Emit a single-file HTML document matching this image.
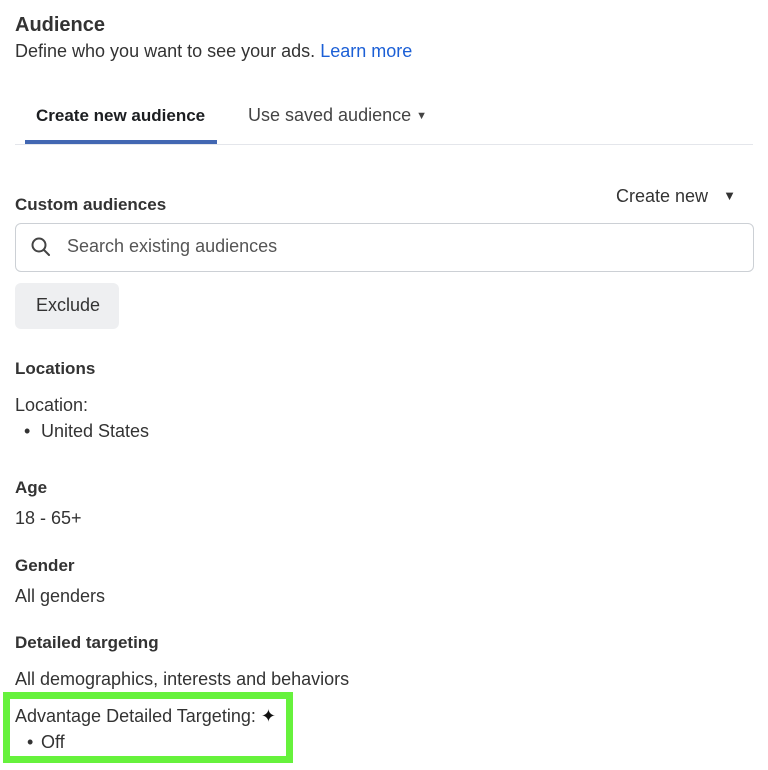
<!DOCTYPE html>
<html><head><style>
body{margin:0;width:768px;height:770px;background:#fff;font-family:"Liberation Sans",sans-serif;color:#1c1e21;position:relative;overflow:hidden}
.a{position:absolute;white-space:nowrap}
.b{font-weight:bold;font-size:17px;color:#333}
.t{font-size:18px;color:#333}
</style></head><body>
<div class="a" style="left:15px;top:14px;font-size:20px;font-weight:bold;color:#333">Audience</div>
<div class="a t" style="left:15px;top:41px">Define who you want to see your ads. <span style="color:#1b5fd6">Learn more</span></div>
<div class="a" style="left:36px;top:106px;font-size:17px;font-weight:bold;color:#1c1e21">Create new audience</div>
<div class="a t" style="left:248px;top:105px;color:#444">Use saved audience <span style="font-size:11px;position:relative;top:-2px">▼</span></div>
<div class="a" style="left:25px;top:140px;width:192px;height:4px;background:#4267b2"></div>
<div class="a" style="left:15px;top:144px;width:738px;height:1px;background:#e4e6eb"></div>
<div class="a b" style="left:15px;top:195px">Custom audiences</div>
<div class="a t" style="left:616px;top:186px">Create new &nbsp;&nbsp;<span style="font-size:13px;position:relative;top:-2px">▼</span></div>
<div class="a" style="left:15px;top:223px;width:737px;height:47px;border:1px solid #ccd0d5;border-radius:6px"></div>
<svg class="a" style="left:30px;top:236px" width="22" height="22" viewBox="0 0 22 22"><circle cx="9" cy="9" r="6.5" fill="none" stroke="#444" stroke-width="2"/><path d="M14 14l5 5" stroke="#444" stroke-width="2" stroke-linecap="round"/></svg>
<div class="a t" style="left:67px;top:236px;color:#555">Search existing audiences</div>
<div class="a" style="left:15px;top:283px;width:104px;height:46px;background:#eeeff1;border-radius:6px"></div>
<div class="a t" style="left:36px;top:295px">Exclude</div>
<div class="a b" style="left:15px;top:359px">Locations</div>
<div class="a t" style="left:15px;top:395px">Location:</div>
<div class="a t" style="left:24px;top:421px">• <span style="position:absolute;left:17px">United States</span></div>
<div class="a b" style="left:15px;top:478px">Age</div>
<div class="a t" style="left:15px;top:508px">18 - 65+</div>
<div class="a b" style="left:15px;top:556px">Gender</div>
<div class="a t" style="left:15px;top:586px">All genders</div>
<div class="a b" style="left:15px;top:633px">Detailed targeting</div>
<div class="a t" style="left:15px;top:669px">All demographics, interests and behaviors</div>
<div class="a" style="left:3px;top:692px;width:276px;height:57px;border:7px solid #66f23c"></div>
<div class="a t" style="left:15px;top:706px">Advantage Detailed Targeting: <span style="color:#111">✦</span></div>
<div class="a t" style="left:27px;top:732px">• <span style="position:absolute;left:14px">Off</span></div>
</body></html>
